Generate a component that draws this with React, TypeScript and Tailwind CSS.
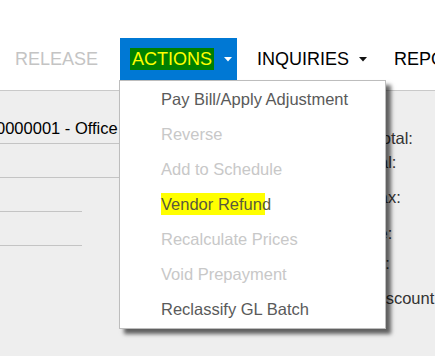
import React from "react";

const menuItems: { label: string; enabled: boolean; marked?: boolean }[] = [
  { label: "Pay Bill/Apply Adjustment", enabled: true },
  { label: "Reverse", enabled: false },
  { label: "Add to Schedule", enabled: false },
  { label: "Vendor Refund", enabled: true, marked: true },
  { label: "Recalculate Prices", enabled: false },
  { label: "Void Prepayment", enabled: false },
  { label: "Reclassify GL Batch", enabled: true },
];

// labels on the right sit mostly under the menu; only their tails show
const totals = [
  { label: "Detail Total:", cls: "mt-[37px] pl-[47px]" },
  { label: "Tax Total:", cls: "mt-[4px] pl-[47px]" },
  { label: "Withholding Tax:", cls: "mt-[15px] pl-[0px]" },
  { label: "Balance:", cls: "mt-[16px] pl-[48px]" },
  { label: "Retainage:", cls: "mt-[10px] pl-[30px]" },
  { label: "Cash Discount Total:", cls: "mt-[15px] pl-[47px]" },
];

function Caret({ color }: { color: string }) {
  return (
    <svg width="8" height="5" viewBox="0 0 8 5" className="shrink-0">
      <path d="M0 0 L8 0 L4 4.5 Z" fill={color} />
    </svg>
  );
}

export default function App() {
  return (
    <div className="relative h-[356px] w-[435px] overflow-hidden bg-[#eeeeee] font-['Liberation_Sans',Arial,sans-serif]">
      {/* toolbar */}
      <div className="h-[91px] border-b border-[#c9c9c9] bg-white pt-[38px]">
        <div className="flex h-[42px] items-center whitespace-nowrap text-[18px]">
          <span className="pl-[15px] text-[#c4c4c4]">RELEASE</span>
          <div className="ml-[22px] flex h-full items-center bg-[#0078d4] pl-[10px] pr-[5px]">
            <span className="inline-block bg-[#008000] px-[2px] leading-[22px] text-[#ffff00]">
              ACTIONS
            </span>
            <span className="ml-[10px]">
              <Caret color="#ffffff" />
            </span>
          </div>
          <span className="ml-[20px] text-black">INQUIRIES</span>
          <span className="ml-[10px]">
            <Caret color="#111111" />
          </span>
          <span className="ml-[27px] text-black">REPORTS</span>
        </div>
      </div>

      {/* form */}
      <div className="flex">
        <div className="w-[300px] shrink-0">
          <div className="h-[53px] border-b border-[#c4c4c4] pt-[27px]">
            <span className="-ml-[4px] block whitespace-nowrap text-[16.5px] leading-[20px] text-black">
              0000001 - Office
            </span>
          </div>
          <div className="h-[34px] border-b border-[#c4c4c4]" />
          <div className="h-[34px] w-[82px] border-b border-[#c4c4c4]" />
          <div className="h-[34px] w-[82px] border-b border-[#c4c4c4]" />
        </div>
        <div className="-ml-[20px] flex flex-col whitespace-nowrap text-[16.5px] leading-[20px] text-[#333333]">
          {totals.map((t) => (
            <div key={t.label} className={t.cls}>
              {t.label}
            </div>
          ))}
        </div>
      </div>

      {/* Actions dropdown */}
      <div className="absolute left-[119px] top-[80px] w-[267px] border border-[#bdbdbd] bg-white py-[1px] shadow-[5px_5px_4px_rgba(0,0,0,0.6)]">
        {menuItems.map((m) => (
          <div
            key={m.label}
            className={
              "flex h-[35px] items-center whitespace-nowrap pl-[41px] text-[16.5px] " +
              (m.enabled ? "text-[#5a5a5a]" : "text-[#c8c8c8]")
            }
          >
            {m.marked ? (
              <span className="-mt-[2px] inline-block bg-[linear-gradient(#ffff00,#ffff00)] bg-[length:104px_22px] bg-left bg-no-repeat leading-[22px] text-[#5a5a3c]">
                {m.label}
              </span>
            ) : (
              m.label
            )}
          </div>
        ))}
      </div>
    </div>
  );
}
